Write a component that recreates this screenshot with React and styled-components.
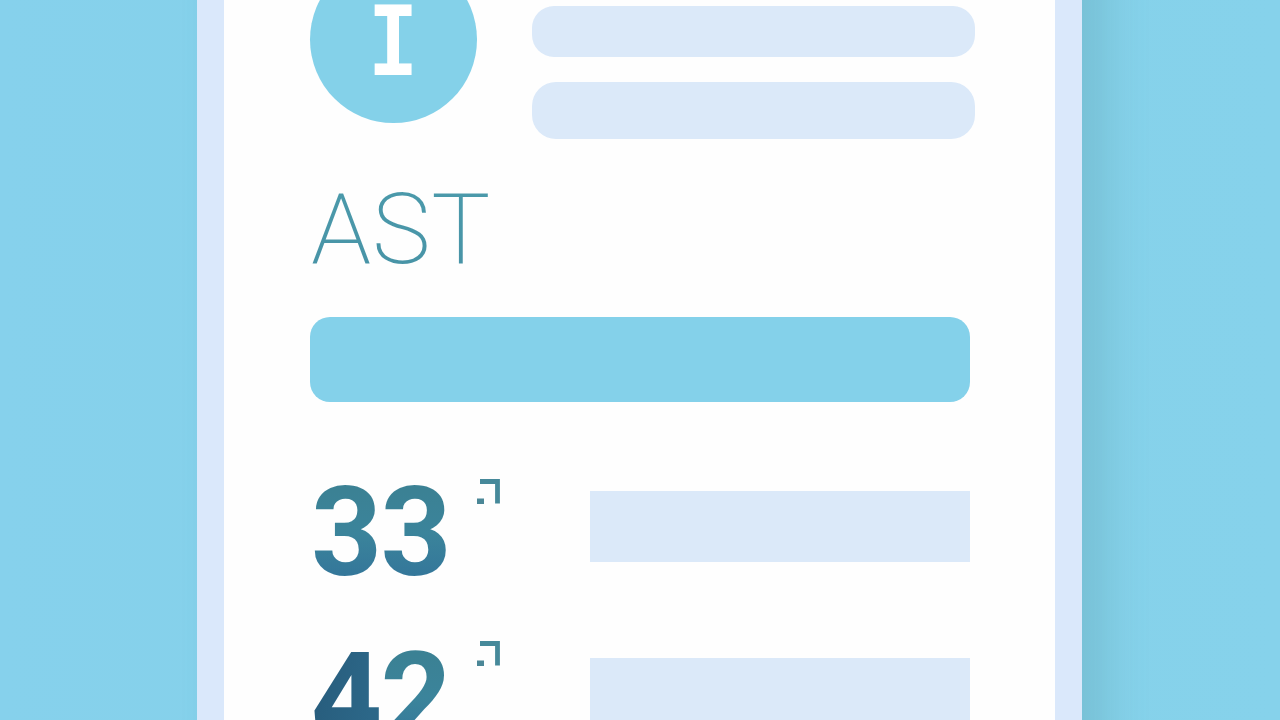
import React from "react";
import styled, { createGlobalStyle } from "styled-components";

const Global = createGlobalStyle`
  * { box-sizing: border-box; }
  body { margin: 0; background: #86d1ea; overflow: hidden; font-family: Roboto, sans-serif; }
`;

const Page = styled.main`
  display: flex;
  height: 720px;
  overflow: hidden;
  padding-left: 197px;
  background: linear-gradient(90deg, #86d1ec 0%, #84d1e8 50%, #86d2eb 100%);
`;

const Card = styled.section`
  display: flex;
  flex-direction: column;
  width: 885px;
  height: 900px;
  margin-top: -80px;
  padding: 36px 81px 0 86px;
  border: solid #dae8fb;
  border-width: 0 27px 0 27px;
  background: #fefefe;
  box-shadow: 26px 0 36px rgba(90, 155, 170, 0.3);
  flex: none;
`;

const Header = styled.header`
  display: flex;
  height: 166px;
`;

const Avatar = styled.div`
  display: flex;
  align-items: center;
  justify-content: center;
  flex: none;
  width: 167px;
  height: 167px;
  border-radius: 50%;
  background: #84d1e9;
`;

const Initial = styled.span`
  color: #fff;
  font: 400 90px/96px "DejaVu Sans Mono", monospace;
  -webkit-text-stroke: 4px #fff;
  transform: scaleX(0.91);
  margin-top: 5px;
`;

const Lines = styled.div`
  display: flex;
  flex-direction: column;
  gap: 25px;
  flex: none;
  width: 443px;
  margin: 50px 0 0 55px;
`;

const Line = styled.div`
  flex: none;
  height: ${(p) => p.$height}px;
  border-radius: ${(p) => p.$radius}px;
  background: #dbe9f9;
`;

const Title = styled.h1`
  margin: 57px 0 0;
  height: 138px;
  font-size: 99px;
  font-weight: 200;
  line-height: 100px;
  padding-left: 1px;
  letter-spacing: 0.8px;
  background: linear-gradient(#4b9aab, #4690a4);
  background-clip: text;
  color: transparent;
`;

const Banner = styled.div`
  flex: none;
  width: 660px;
  height: 85px;
  border-radius: 20px;
  background: #84d1ea;
`;

const Metric = styled.div`
  display: flex;
  flex: none;
  height: 120px;
  margin-top: ${(p) => p.$top}px;
`;

const Value = styled.div`
  display: flex;
  flex: none;
  width: 164px;
  margin-top: ${(p) => p.$shift}px;
  padding-left: 1px;
  font-size: 124px;
  font-weight: 700;
  line-height: 120px;
  letter-spacing: -1.7px;
`;

const Digit = styled.span`
  height: 120px;
  background: ${(p) => p.$dark ? "linear-gradient(100deg, #285e7e 20%, #2c6788 80%)" : "linear-gradient(#3b8194 15%, #3b849b 50%, #34779a 85%)"};
  background-clip: text;
  color: transparent;
`;

const Corner = styled.svg`
  width: 28px;
  height: 30px;
  flex: none;
`;

const Block = styled.div`
  flex: none;
  width: 380px;
  height: ${(p) => p.$height}px;
  margin: ${(p) => p.$top}px 0 0 88px;
  background: #dbe9f9;
`;

function CornerIcon() {
  return (
    <Corner viewBox="0 0 28 30">
      <path d="M6 5.5H23.5V27.5" fill="none" stroke="#46899a" strokeWidth="4.8" />
      <path d="M3 22.5h7v5.5H3z" fill="#4b8797" />
    </Corner>
  );
}

export default function App() {
  return (
    <>
      <Global />
      <Page>
        <Card>
          <Header>
            <Avatar><Initial>I</Initial></Avatar>
            <Lines>
              <Line $height={51} $radius={22} />
              <Line $height={57} $radius={24} />
            </Lines>
          </Header>
          <Title>AST</Title>
          <Banner />
          <Metric $top={74}>
            <Value $shift={-3}><Digit>3</Digit><Digit>3</Digit></Value>
            <CornerIcon />
            <Block $height={71} $top={15} />
          </Metric>
          <Metric $top={42}>
            <Value $shift={0}><Digit $dark>4</Digit><Digit>2</Digit></Value>
            <CornerIcon />
            <Block $height={80} $top={20} />
          </Metric>
        </Card>
      </Page>
    </>
  );
}
